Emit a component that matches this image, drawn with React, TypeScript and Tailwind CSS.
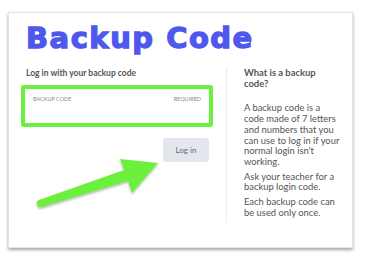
const about = [
    ["A backup code is a", "code made of 7 letters", "and numbers that you", "can use to log in if your", "normal login isn't", "working."],
    ["Ask your teacher for a", "backup login code."],
    ["Each backup code can", "be used only once."],
]

export default function App() {
    return (
        <div className="relative h-[260px] w-[369px] bg-white font-['Lato',sans-serif]">
            <div className="absolute left-[8px] top-[12px] h-[236px] w-[345px] border border-[#e3e3e3] bg-white shadow-[0_2px_3px_rgba(0,0,0,0.35)]">
                <h1 className="ml-[17px] mt-[5px] font-['DejaVu_Sans',sans-serif] text-[29px] font-bold leading-[40px] tracking-[1.5px] text-[#4f58ec] [-webkit-text-stroke:1.3px_#4f58ec]">
                    Backup Code
                </h1>
                <div className="mt-[9px] flex">
                    <div className="w-[217px] pl-[12px]">
                        <p className="ml-[5px] text-[8.5px] font-bold leading-[12px] text-[#555]">
                            Log in with your backup code
                        </p>
                        <div className="mt-[6px] h-[42px] w-[192px] rounded-[3px] border-[4px] border-[#6bf03d] px-[8px] pt-[6px]">
                            <div className="flex justify-between text-[5.5px] uppercase leading-[8px] text-[#888]">
                                <span>Backup code</span>
                                <span>Required</span>
                            </div>
                        </div>
                        <div className="mt-[11px] flex w-[188px] justify-end">
                            <button className="h-[24px] w-[46px] rounded-[3px] bg-[#e4e6ed] text-[8px] text-[#666]">
                                Log in
                            </button>
                        </div>
                    </div>
                    <div className="h-[156px] w-px bg-[#ececec]" />
                    <div className="pl-[17px] pr-[4px] text-[9.4px] leading-[10.7px] text-[#555]">
                        <p className="mt-[1px] font-bold">
                            What is a backup
                            <br />
                            code?
                        </p>
                        <div className="mt-[14px] flex flex-col gap-[4px]">
                            {about.map((lines, i) => (
                                <p key={i} className="whitespace-nowrap">
                                    {lines.map((l, j) => (
                                        <span key={j} className="block">{l}</span>
                                    ))}
                                </p>
                            ))}
                        </div>
                    </div>
                </div>
            </div>
            <svg className="absolute left-0 top-0" width="369" height="260" viewBox="0 0 369 260">
                <defs>
                    <filter id="sh" x="-20%" y="-20%" width="140%" height="140%">
                        <feDropShadow dx="0" dy="1.5" stdDeviation="1.2" floodColor="#000" floodOpacity="0.3" />
                    </filter>
                </defs>
                <path
                    d="M37 204 Q36 201 39 200 L124 170 L120 159 L158 163 L132 193 L128 181 L42 207 Q38 208 37 204 Z"
                    fill="#6cf03c"
                    filter="url(#sh)"
                />
            </svg>
        </div>
    )
}
